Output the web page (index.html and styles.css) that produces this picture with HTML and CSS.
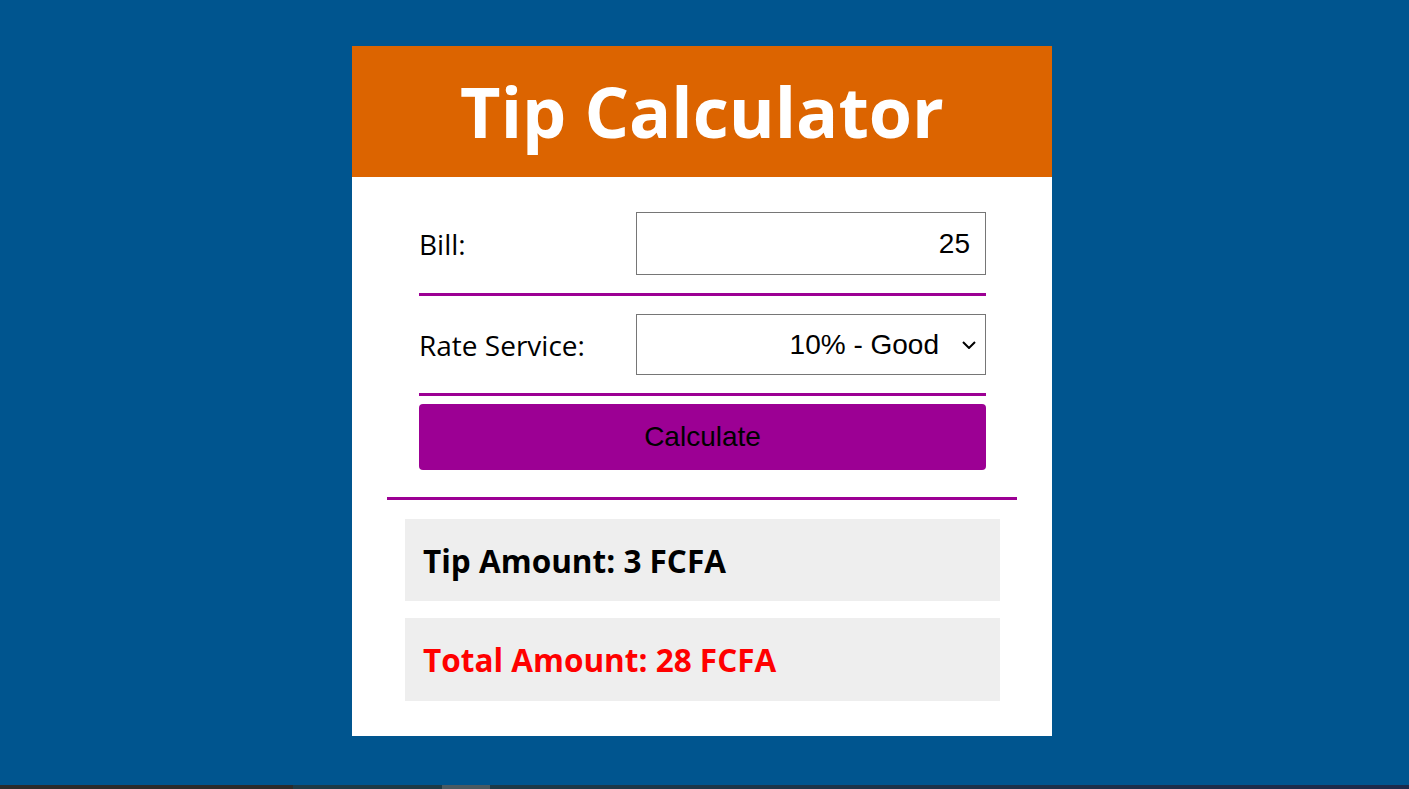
FILE: index.html
```html
<!DOCTYPE html>
<html lang="en">
<head>
    <meta charset="UTF-8">
    <meta name="viewport" content="width=device-width, initial-scale=1.0">
    <title>Tip Calculator</title>
    <link rel="stylesheet" href="styles.css">
</head>
<body>
    <div class="calculator">
        <h1 class="title">Tip Calculator</h1>

        <form class="tip-form" onsubmit="return false;">
            <div class="form-row">
                <label for="bill">Bill:</label>
                <input type="text" id="bill" value="25">
            </div>
            <hr class="line">
            <div class="form-row">
                <label for="rate">Rate Service:</label>
                <div class="select-wrap">
                    <select id="rate">
                        <option value="0.05">5% - Bad</option>
                        <option value="0.1" selected>10% - Good</option>
                        <option value="0.15">15% - Great</option>
                        <option value="0.2">20% - Excellent</option>
                    </select>
                    <svg class="chevron" width="14" height="8" viewBox="0 0 14 8">
                        <path d="M1 1 L7 7 L13 1" fill="none" stroke="#000" stroke-width="2"/>
                    </svg>
                </div>
            </div>
            <hr class="line">
            <button class="calc-button" type="button">Calculate</button>
        </form>

        <hr class="line wide">

        <div class="result">Tip Amount: 3 FCFA</div>
        <div class="result total">Total Amount: 28 FCFA</div>
    </div>

    <div class="taskbar"></div>
</body>
</html>
```

FILE: styles.css
```css
html, body {
    margin: 0;
    padding: 0;
}
body {
    background-color: #00558f;
    font-family: 'Open Sans', 'Noto Sans', sans-serif;
    padding: 46px 5px 0 0;
    min-height: 789px;
    box-sizing: border-box;
}
.calculator {
    width: 700px;
    margin: 0 auto;
    background-color: #fff;
    padding-bottom: 35px;
}
.title {
    margin: 0;
    height: 131px;
    background-color: #dc6400;
    color: #fff;
    font-size: 70px;
    font-weight: bold;
    text-align: center;
    line-height: 131px;
}
.tip-form {
    padding: 35px 66px 0 67px;
}
.form-row {
    display: flex;
    align-items: center;
    justify-content: space-between;
}
.form-row label {
    font-size: 28px;
    color: #000;
}
.form-row input,
.form-row select {
    width: 350px;
    height: 63px;
    box-sizing: border-box;
    border: 1px solid #767676;
    border-radius: 0;
    background-color: #fff;
    font-family: 'Liberation Sans', Arial, sans-serif;
    font-size: 28px;
    text-align: right;
    padding: 0 15px;
    color: #000;
    outline: none;
}
.select-wrap {
    position: relative;
    display: flex;
}
.form-row select {
    height: 61px;
    -webkit-appearance: none;
    appearance: none;
    text-align-last: right;
    padding-right: 46px;
    cursor: pointer;
}
.chevron {
    position: absolute;
    right: 10px;
    top: 27px;
    pointer-events: none;
}
.line {
    border: none;
    height: 3px;
    background-color: #9c0094;
    margin: 18px 0 18px 0;
}
.tip-form .line:nth-of-type(2) {
    margin: 18px 0 8px 0;
}
.calc-button {
    display: block;
    width: 100%;
    height: 66px;
    border: none;
    border-radius: 4px;
    background-color: #9c0094;
    color: #000;
    font-family: 'Liberation Sans', Arial, sans-serif;
    font-size: 28px;
    cursor: pointer;
}
.line.wide {
    margin: 27px 35px 19px 35px;
}
.result {
    margin: 0 52px 0 53px;
    height: 82px;
    background-color: #eee;
    padding-left: 18px;
    display: flex;
    align-items: center;
    font-size: 31.5px;
    font-weight: bold;
    color: #000;
}
.result.total {
    margin-top: 17px;
    height: 83px;
    color: #ff0000;
}
.taskbar {
    position: fixed;
    left: 0;
    right: 0;
    bottom: 0;
    height: 4px;
    background: linear-gradient(to right, #2b2b2b 0, #2b2b2b 293px, #1d3a46 293px, #1d3a46 442px, #4a5a62 442px, #4a5a62 490px, #1c3a48 490px, #1c2a4c 100%);
}
```
